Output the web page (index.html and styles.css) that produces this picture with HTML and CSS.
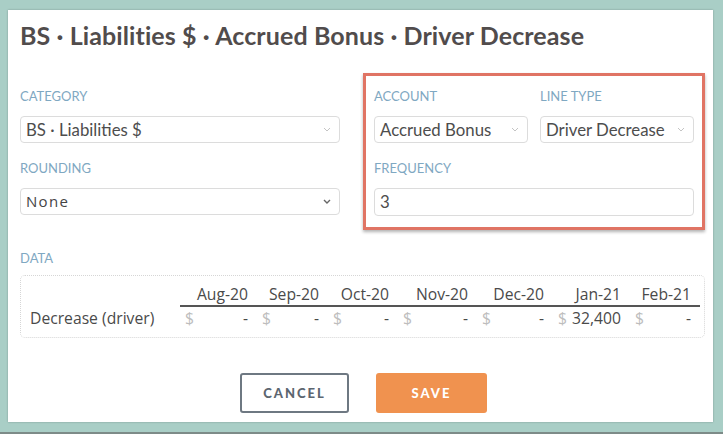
FILE: index.html
```html
<!DOCTYPE html>
<html>
<head>
<meta charset="utf-8">
<link rel="stylesheet" href="styles.css">
</head>
<body>
<div class="panel">
  <h1 class="title">BS · Liabilities $ · Accrued Bonus · Driver Decrease</h1>
  <div class="form-row">
    <div class="left-col">
      <div class="field">
        <div class="label">Category</div>
        <div class="select">BS · Liabilities $<svg class="chev light" viewBox="0 0 8 5"><path d="M1 1l3 3 3-3" fill="none" stroke="currentColor" stroke-width="1"/></svg></div>
      </div>
      <div class="field">
        <div class="label">Rounding</div>
        <div class="select native">None<svg class="chev dark" viewBox="0 0 8 5"><path d="M1 1l3 3 3-3" fill="none" stroke="currentColor" stroke-width="1.4"/></svg></div>
      </div>
    </div>
    <div class="highlight">
      <div class="pair">
        <div class="field">
          <div class="label">Account</div>
          <div class="select">Accrued Bonus<svg class="chev light" viewBox="0 0 8 5"><path d="M1 1l3 3 3-3" fill="none" stroke="currentColor" stroke-width="1"/></svg></div>
        </div>
        <div class="field">
          <div class="label">Line Type</div>
          <div class="select">Driver Decrease<svg class="chev light" viewBox="0 0 8 5"><path d="M1 1l3 3 3-3" fill="none" stroke="currentColor" stroke-width="1"/></svg></div>
        </div>
      </div>
      <div class="field">
        <div class="label">Frequency</div>
        <div class="input">3</div>
      </div>
    </div>
  </div>
  <div class="label data-label">Data</div>
  <div class="data-box">
    <div class="grid">
      <div class="hcell blank"></div>
      <div class="hcell">Aug-20</div>
      <div class="hcell">Sep-20</div>
      <div class="hcell">Oct-20</div>
      <div class="hcell">Nov-20</div>
      <div class="hcell">Dec-20</div>
      <div class="hcell">Jan-21</div>
      <div class="hcell">Feb-21</div>
      <div class="rlabel">Decrease (driver)</div>
      <div class="vcell"><span class="cur">$</span><span>-</span></div>
      <div class="vcell"><span class="cur">$</span><span>-</span></div>
      <div class="vcell"><span class="cur">$</span><span>-</span></div>
      <div class="vcell"><span class="cur">$</span><span>-</span></div>
      <div class="vcell"><span class="cur">$</span><span>-</span></div>
      <div class="vcell"><span class="cur">$</span><span>32,400</span></div>
      <div class="vcell"><span class="cur">$</span><span>-</span></div>
    </div>
  </div>
  <div class="actions">
    <button class="btn cancel">Cancel</button>
    <button class="btn save">Save</button>
  </div>
</div>
</body>
</html>
```

FILE: styles.css
```css
html, body {
  margin: 0;
  padding: 0;
}
body {
  background: #a9cec6;
  border-bottom: 2px solid #7d8b88;
  padding-top: 10px;
  box-sizing: content-box;
  height: 422px;
  overflow: hidden;
  font-family: "Lato", "Open Sans", sans-serif;
}
.panel {
  margin-left: 8px;
  width: 705px;
  height: 412px;
  box-sizing: border-box;
  background: #fff;
  box-shadow: 0 0 2px rgba(0,0,0,0.25);
  padding: 10px 8px 0 12px;
}
.title {
  margin: 0;
  font-family: "Lato", sans-serif;
  font-weight: 700;
  font-size: 25px;
  line-height: 30px;
  color: #514c4c;
  letter-spacing: 0.1px;
}
.form-row {
  display: flex;
  align-items: flex-start;
  margin-top: 23px;
}
.left-col {
  width: 320px;
  padding-top: 14px;
}
.highlight {
  margin-left: 23px;
  width: 342px;
  box-sizing: border-box;
  border: 3px solid #e07464;
  box-shadow: 0 2px 3px rgba(0,0,0,0.3);
  padding: 11px 8px 11px 8px;
}
.pair {
  display: flex;
  gap: 12px;
}
.pair .field {
  width: 154px;
}
.field {
  margin-bottom: 16px;
}
.field:last-child {
  margin-bottom: 0;
}
.pair .field {
  margin-bottom: 16px;
}
.label {
  font-family: "Lato", sans-serif;
  font-size: 13px;
  line-height: 18px;
  text-transform: uppercase;
  color: #7fa8c2;
  margin-bottom: 11px;
}
.select, .input {
  position: relative;
  height: 27px;
  box-sizing: border-box;
  border: 1px solid #dcdcdc;
  border-radius: 4px;
  padding: 0 5px;
  font-family: "Lato", sans-serif;
  font-size: 16.8px;
  line-height: 25px;
  color: #4d4d4d;
  display: flex;
  align-items: center;
  justify-content: space-between;
}
.input {
  height: 28px;
  line-height: 26px;
}
.select.native {
  font-family: "Open Sans", sans-serif;
  font-size: 15px;
  letter-spacing: 1.3px;
  color: #444;
  padding-left: 5px;
}
.chev {
  width: 8px;
  height: 5px;
  margin-right: 3px;
}
.chev.light {
  color: #c4c4c4;
}
.chev.dark {
  color: #666;
}
.data-label {
  margin-top: 19px;
  margin-bottom: 8px;
}
.data-box {
  width: 685px;
  height: 63px;
  box-sizing: border-box;
  border: 1px dotted #d6d6d6;
  border-radius: 5px;
  padding: 7px 0 0 9px;
}
.grid {
  display: grid;
  grid-template-columns: 150px 77px 71px 70px 79px 76px 77px 70px;
  font-family: "Open Sans", sans-serif;
  font-size: 15.7px;
  color: #4a4a4a;
}
.hcell {
  border-bottom: 2px solid #555;
  text-align: right;
  padding-right: 9px;
  line-height: 22px;
  height: 24px;
  box-sizing: border-box;
}
.hcell.blank {
  border-bottom: none;
}
.rlabel {
  line-height: 23px;
}
.vcell {
  display: flex;
  justify-content: space-between;
  padding: 0 9px 0 5px;
  line-height: 23px;
}
.vcell:nth-child(9) {
  padding-left: 7px;
}
.cur {
  color: #bdbdbd;
}
.actions {
  display: flex;
  justify-content: center;
  gap: 27px;
  margin-top: 35px;
  padding-left: 2px;
}
.btn {
  height: 40px;
  box-sizing: border-box;
  border-radius: 3px;
  font-family: "Lato", sans-serif;
  font-weight: 900;
  font-size: 13px;
  letter-spacing: 2px;
  text-transform: uppercase;
}
.cancel {
  width: 109px;
  background: #fff;
  border: 2px solid #6e7882;
  color: #5c6670;
}
.save {
  width: 111px;
  background: #f0924f;
  border: none;
  color: #fff;
}
```
